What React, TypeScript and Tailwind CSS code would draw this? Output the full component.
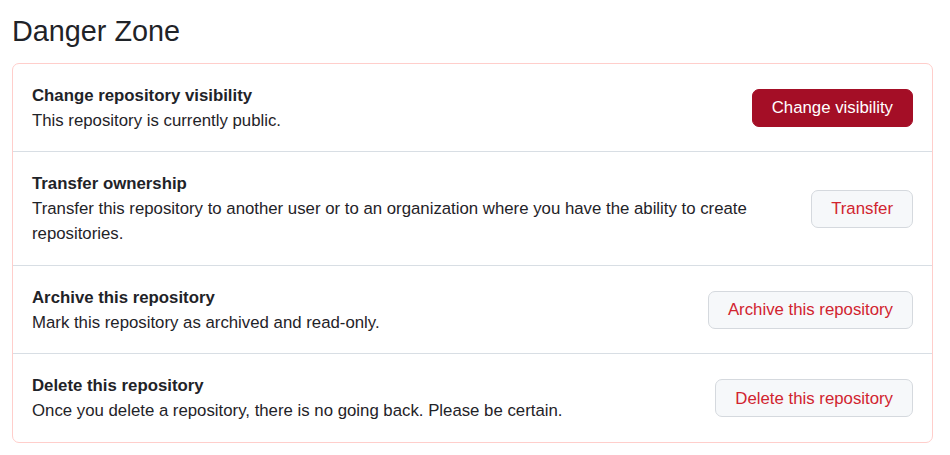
import React from 'react';

interface DangerRow {
  title: string;
  description: string;
  action: string;
  primary?: boolean;
}

const rows: DangerRow[] = [
  {
    title: 'Change repository visibility',
    description: 'This repository is currently public.',
    action: 'Change visibility',
    primary: true,
  },
  {
    title: 'Transfer ownership',
    description:
      'Transfer this repository to another user or to an organization where you have the ability to create repositories.',
    action: 'Transfer',
  },
  {
    title: 'Archive this repository',
    description: 'Mark this repository as archived and read-only.',
    action: 'Archive this repository',
  },
  {
    title: 'Delete this repository',
    description: 'Once you delete a repository, there is no going back. Please be certain.',
    action: 'Delete this repository',
  },
];

const App: React.FC = () => {
  return (
    <div
      className="min-h-screen bg-white pl-[12px] pr-[17px] pt-[10px] text-[#1f2328]"
      style={{ fontFamily: '"Liberation Sans", Arial, sans-serif' }}
    >
      <h2 className="text-[28.8px] leading-[43px] font-normal mb-[10px]">Danger Zone</h2>

      <div className="rounded-[7px] border border-[#ffcecb]">
        {rows.map((row, index) => (
          <div
            key={row.title}
            className={`flex items-center gap-[19px] px-[19px] py-[18.5px] ${
              index > 0 ? 'border-t border-[#d8dee4]' : ''
            }`}
          >
            <div className="flex-1 text-[16.8px] leading-[25.2px]">
              <div className="font-bold">{row.title}</div>
              <div>{row.description}</div>
            </div>
            {row.primary ? (
              <button className="h-[38px] px-[19px] rounded-[7px] border border-[#a40e26] bg-[#a40e26] text-white text-[16.8px] whitespace-nowrap">
                {row.action}
              </button>
            ) : (
              <button className="h-[38px] px-[19px] rounded-[7px] border border-[#d5d9de] bg-[#f6f8fa] text-[#d1242f] text-[16.8px] whitespace-nowrap">
                {row.action}
              </button>
            )}
          </div>
        ))}
      </div>
    </div>
  );
};

export default App;
